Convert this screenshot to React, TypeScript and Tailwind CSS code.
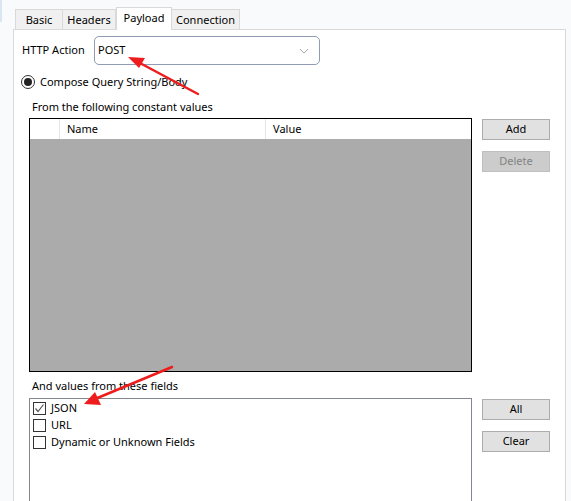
import React from 'react';

const font = { fontFamily: '"Noto Sans", "Segoe UI", sans-serif' };

function Tab({ label, active, width }: { label: string; active?: boolean; width: string }) {
  if (active) {
    return (
      <div className={`${width} h-[23px] -mb-[1px] bg-white border border-[#d9d9d9] border-b-0 flex items-start justify-center pt-[2px] z-10`}>
        {label}
      </div>
    );
  }
  return (
    <div className={`${width} h-[20px] bg-[#f0f0f0] border border-[#d9d9d9] border-b-0 -ml-[1px] first:ml-0 flex items-center justify-center pt-[2px]`}>
      {label}
    </div>
  );
}

function WinButton({ label, disabled }: { label: string; disabled?: boolean }) {
  return (
    <div
      className={
        disabled
          ? 'w-[68px] h-[21px] bg-[#cccccc] border border-[#bfbfbf] text-[#838383] flex items-center justify-center'
          : 'w-[68px] h-[21px] bg-[#e1e1e1] border border-[#adadad] text-black flex items-center justify-center'
      }
    >
      {label}
    </div>
  );
}

function CheckRow({ label, checked }: { label: string; checked?: boolean }) {
  return (
    <div className="flex items-center h-[17px] gap-[5px]">
      <div className="w-[13px] h-[13px] border border-[#333] bg-white flex items-center justify-center">
        {checked && (
          <svg width="11" height="11" viewBox="0 0 11 11">
            <path d="M1.5 5.5 L4 8.5 L9.5 1.5" stroke="#555" strokeWidth="1.2" fill="none" />
          </svg>
        )}
      </div>
      <span>{label}</span>
    </div>
  );
}

export default function App() {
  return (
    <div className="relative w-[571px] h-[501px] overflow-hidden bg-[#f9fafb] text-[11px] text-black" style={font}>
      <div className="absolute left-0 top-0 w-[2px] h-[22px] bg-[#dbe6f4]" />
      <div className="pt-[8px] pl-[13px]">
        {/* Tabs */}
        <div className="flex items-end pl-[2px] h-[21px]">
          <Tab label="Basic" width="w-[48px]" />
          <Tab label="Headers" width="w-[54px]" />
          <Tab label="Payload" active width="w-[56px]" />
          <Tab label="Connection" width="w-[69px]" />
        </div>

        {/* Panel */}
        <div className="w-[553px] h-[480px] bg-white border border-[#d9d9d9]">
          {/* HTTP Action */}
          <div className="flex items-center mt-[6px] pl-[8px]">
            <span className="w-[72px]">HTTP Action</span>
            <div className="w-[226px] h-[29px] border border-[#8f9cb3] rounded-[5px] flex items-center justify-between pl-[3px] pr-[10px]">
              <span>POST</span>
              <svg width="10" height="6" viewBox="0 0 10 6">
                <path d="M1 1 L5 5 L9 1" stroke="#a8a8a8" strokeWidth="1" fill="none" />
              </svg>
            </div>
          </div>

          {/* Radio */}
          <div className="flex items-center mt-[9px] pl-[7px] gap-[5px] h-[16px]">
            <div className="w-[14px] h-[14px] rounded-full border border-[#333] flex items-center justify-center">
              <div className="w-[8px] h-[8px] rounded-full bg-[#222]" />
            </div>
            <span>Compose Query String/Body</span>
          </div>

          <div className="pl-[18px] mt-[8px] h-[17px] leading-[17px]">From the following constant values</div>

          {/* Grid + buttons */}
          <div className="flex pl-[15px] mt-[3px] gap-[10px]">
            <div className="w-[443px] h-[254px] border border-black flex flex-col">
              <div className="flex h-[20px] bg-white">
                <div className="w-[30px] border-r border-[#e5e5e5]" />
                <div className="w-[206px] border-r border-[#e5e5e5] pl-[7px] flex items-center">Name</div>
                <div className="flex-1 pl-[7px] flex items-center">Value</div>
              </div>
              <div className="flex-1 bg-[#ababab]" />
            </div>
            <div className="flex flex-col gap-[11px] pt-[1px]">
              <WinButton label="Add" />
              <WinButton label="Delete" disabled />
            </div>
          </div>

          <div className="pl-[18px] mt-[5px] h-[17px] leading-[17px]">And values from these fields</div>

          {/* Fields list + buttons */}
          <div className="flex pl-[15px] mt-[4px] gap-[10px]">
            <div className="w-[443px] h-[110px] border border-[#828790] pl-[3px] pt-[1px] flex flex-col">
              <CheckRow label="JSON" checked />
              <CheckRow label="URL" />
              <CheckRow label="Dynamic or Unknown Fields" />
            </div>
            <div className="flex flex-col gap-[11px] pt-[1px]">
              <WinButton label="All" />
              <WinButton label="Clear" />
            </div>
          </div>
        </div>
      </div>

      {/* Annotation arrows */}
      <svg className="absolute inset-0 pointer-events-none" width="571" height="501">
        <g stroke="#ee1c1c" strokeWidth="2.5" strokeLinecap="round">
          <line x1="198" y1="94" x2="138" y2="62" />
          <line x1="172" y1="367" x2="95" y2="399" />
        </g>
        <polygon points="128,57 145,58 139,68" fill="#ee1c1c" />
        <polygon points="84,404 95,392 101,405" fill="#ee1c1c" />
      </svg>
    </div>
  );
}
